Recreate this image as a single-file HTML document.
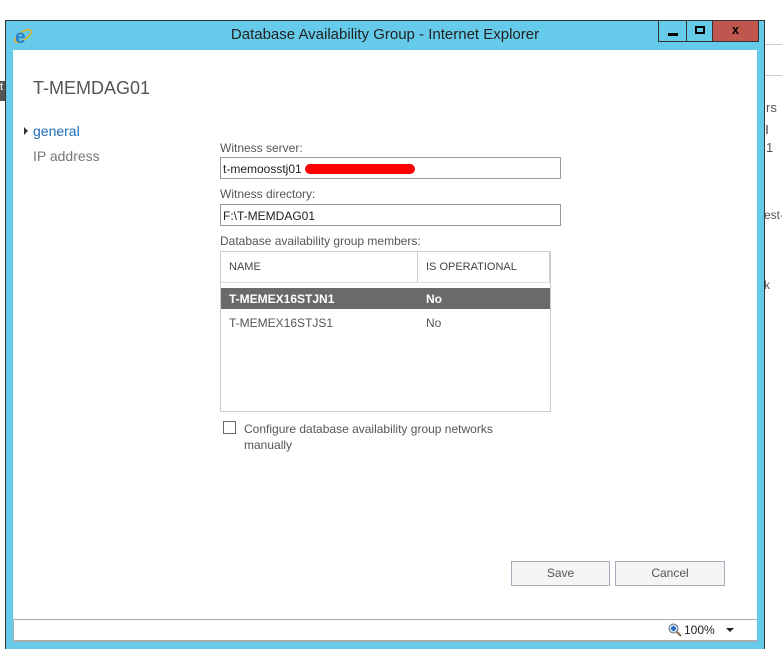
<!DOCTYPE html>
<html><head><meta charset="utf-8"><style>
*{margin:0;padding:0;box-sizing:border-box}
body{width:782px;height:649px;background:#fff;position:relative;overflow:hidden;font-family:"Liberation Sans",sans-serif;color:#444}
.a{position:absolute}
.t{font-size:12px;color:#555;white-space:nowrap}
</style></head><body>
<div class="a" style="left:764px;top:44px;width:18px;height:1px;background:#ccc"></div>
<div class="a" style="left:764px;top:75px;width:18px;height:1px;background:#ccc"></div>
<div class="a t" style="left:766px;top:100px;font-size:13px">rs</div>
<div class="a" style="left:766px;top:125px;width:2px;height:9px;background:#888"></div>
<div class="a t" style="left:766px;top:140px;font-size:13px">1</div>
<div class="a t" style="left:764px;top:208px;font-size:12px">est-</div>
<div class="a t" style="left:764px;top:278px;font-size:12px">k</div>
<div class="a" style="left:0;top:81px;width:5px;height:20px;background:#555;color:#fff;font-size:11px;overflow:hidden">t</div>
<div class="a" style="left:5px;top:20px;width:760px;height:629px;background:#66cbea;border-left:1px solid #333;border-top:1px solid #333;border-right:1px solid #333"></div>
<svg class="a" style="left:12px;top:25px" width="22" height="22" viewBox="0 0 22 22"><ellipse cx="11" cy="11" rx="9.5" ry="4" fill="none" stroke="#e8b020" stroke-width="1.5" transform="rotate(-35 11 11)"/><text x="3" y="18" font-size="19" font-weight="bold" fill="#2a7fd0" font-family="Liberation Sans">e</text></svg>
<div class="a" style="left:0;top:26px;width:770px;text-align:center;font-size:15px;color:#222">Database Availability Group - Internet Explorer</div>
<div class="a" style="left:658px;top:20px;width:29px;height:22px;border:1px solid #333;background:#66cbea"><div class="a" style="left:9px;top:12px;width:10px;height:3px;background:#000"></div></div>
<div class="a" style="left:686px;top:20px;width:27px;height:22px;border:1px solid #333;background:#66cbea"><div class="a" style="left:8px;top:5px;width:10px;height:8px;border:2px solid #000"></div></div>
<div class="a" style="left:712px;top:20px;width:47px;height:22px;border:1px solid #333;background:#c0574f;text-align:center;font-weight:bold;font-size:13px;color:#000;line-height:18px">x</div>
<div class="a" style="left:13px;top:50px;width:744px;height:569px;background:#fff"></div>
<div class="a" style="left:13px;top:619px;width:744px;height:23px;background:#fff;border:1px solid #aaa;border-width:1px 0 2px 1px"></div>
<svg class="a" style="left:668px;top:623px" width="14" height="14" viewBox="0 0 14 14"><circle cx="5.5" cy="5.5" r="4.5" fill="#cde" stroke="#678"/><path d="M3 5.5h5M5.5 3v5" stroke="#1a5fc0" stroke-width="2"/><path d="M9 9l4 4" stroke="#864" stroke-width="2"/></svg>
<div class="a" style="left:684px;top:623px;font-size:12px;color:#222">100%</div>
<div class="a" style="left:726px;top:628px;width:0;height:0;border-left:4px solid transparent;border-right:4px solid transparent;border-top:4px solid #222"></div>
<div class="a" style="left:33px;top:78px;font-size:18px;color:#555">T-MEMDAG01</div>
<div class="a" style="left:24px;top:127px;width:0;height:0;border-top:4px solid transparent;border-bottom:4px solid transparent;border-left:4px solid #333"></div>
<div class="a" style="left:33px;top:123px;font-size:14px;color:#1e6cb8">general</div>
<div class="a" style="left:33px;top:148px;font-size:14px;color:#777">IP address</div>
<div class="a t" style="left:220px;top:141px">Witness server:</div>
<div class="a" style="left:220px;top:157px;width:341px;height:22px;border:1px solid #999"></div>
<div class="a t" style="left:223px;top:162px;color:#222">t-memoosstj01</div>
<div class="a" style="left:305px;top:164px;width:110px;height:10px;background:#f00;border-radius:5px"></div>
<div class="a t" style="left:220px;top:187px">Witness directory:</div>
<div class="a" style="left:220px;top:204px;width:341px;height:22px;border:1px solid #999"></div>
<div class="a t" style="left:223px;top:209px;color:#222">F:\T-MEMDAG01</div>
<div class="a t" style="left:220px;top:234px">Database availability group members:</div>
<div class="a" style="left:220px;top:251px;width:331px;height:161px;border:1px solid #ccc"></div>
<div class="a" style="left:417px;top:252px;width:1px;height:31px;background:#ccc"></div>
<div class="a" style="left:549px;top:252px;width:1px;height:31px;background:#ccc"></div>
<div class="a" style="left:221px;top:282px;width:329px;height:1px;background:#ddd"></div>
<div class="a t" style="left:229px;top:261px;font-size:11px;color:#444">NAME</div>
<div class="a t" style="left:426px;top:261px;font-size:11px;color:#444">IS OPERATIONAL</div>
<div class="a" style="left:221px;top:288px;width:329px;height:21px;background:#6a6a6a"></div>
<div class="a t" style="left:229px;top:292px;color:#fff;font-weight:bold">T-MEMEX16STJN1</div>
<div class="a t" style="left:426px;top:292px;color:#fff;font-weight:bold">No</div>
<div class="a t" style="left:229px;top:316px">T-MEMEX16STJS1</div>
<div class="a t" style="left:426px;top:316px">No</div>
<div class="a" style="left:223px;top:421px;width:13px;height:13px;border:1px solid #666"></div>
<div class="a t" style="left:244px;top:421px;line-height:16px">Configure database availability group networks<br>manually</div>
<div class="a" style="left:511px;top:561px;width:99px;height:25px;background:#f4f4f4;border:1px solid #aab;text-align:center;line-height:23px;font-size:12px;color:#555">Save</div>
<div class="a" style="left:615px;top:561px;width:110px;height:25px;background:#f4f4f4;border:1px solid #aab;text-align:center;line-height:23px;font-size:12px;color:#555">Cancel</div>
</body></html>
